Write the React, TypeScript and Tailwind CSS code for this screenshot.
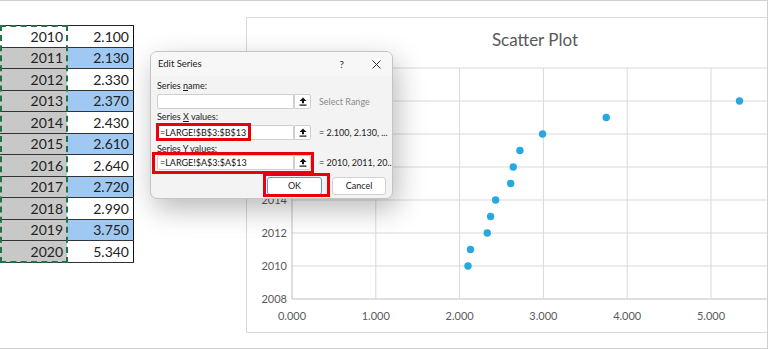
import React from "react";

const rows = [
  [2010, "2.100"],
  [2011, "2.130"],
  [2012, "2.330"],
  [2013, "2.370"],
  [2014, "2.430"],
  [2015, "2.610"],
  [2016, "2.640"],
  [2017, "2.720"],
  [2018, "2.990"],
  [2019, "3.750"],
  [2020, "5.340"],
] as const;

// chart coordinates are relative to the chart box content (page x - 247, page y - 18)
const X0 = 45;
const XS = 83.8;
const YB = 281;
const YS = 16.5;
const px = (v: number) => X0 + v * XS;
const py = (yr: number) => YB - (yr - 2008) * YS;

function UpArrow() {
  return (
    <svg width="8" height="9" viewBox="0 0 8 9">
      <path d="M4 0.5 L7.5 4 L5 4 L5 6.3 L3 6.3 L3 4 L0.5 4 Z" fill="#111" />
      <rect x="0.5" y="7.5" width="7" height="1.2" fill="#111" />
    </svg>
  );
}

function RangeInput({ value }: { value?: string }) {
  return (
    <div className="flex h-[15px] w-[154px] shrink-0">
      <div className="flex-1 h-full bg-white border border-[#cfcfcf] rounded-l-[2px] flex items-center pl-[2px] text-[9px] text-[#111] whitespace-nowrap">
        {value}
      </div>
      <div className="w-[17px] h-full bg-white border border-[#cfcfcf] rounded-r-[2px] flex items-center justify-center">
        <UpArrow />
      </div>
    </div>
  );
}

function ScatterChart() {
  const years = [2008, 2010, 2012, 2014, 2016, 2018, 2020, 2022];
  const xs = [0, 1, 2, 3, 4, 5, 6];
  return (
    <svg width="576" height="314" className="block" style={{ fontFamily: "Lato, sans-serif" }}>
      <text x="288" y="28" textAnchor="middle" fontSize="17" fill="#595959">
        Scatter Plot
      </text>
      {years.map((y) => (
        <line key={y} x1={X0} x2={576} y1={py(y)} y2={py(y)} stroke={y === 2008 ? "#bfbfbf" : "#d9d9d9"} strokeWidth="1" />
      ))}
      {xs.map((x) => (
        <line key={x} x1={px(x)} x2={px(x)} y1={py(2022)} y2={YB} stroke={x === 0 ? "#bfbfbf" : "#d9d9d9"} strokeWidth="1" />
      ))}
      {years.slice(0, 7).map((y) => (
        <text key={y} x={X0 - 5} y={py(y) + 4} textAnchor="end" fontSize="11" fill="#595959">
          {y}
        </text>
      ))}
      {xs.slice(0, 6).map((x) => (
        <text key={x} x={px(x)} y={302} textAnchor="middle" fontSize="11" fill="#595959">
          {x.toFixed(3)}
        </text>
      ))}
      {rows.map(([y, v]) => (
        <circle key={y} cx={px(parseFloat(v))} cy={py(y)} r="3.7" fill="#26a8e0" />
      ))}
    </svg>
  );
}

export default function App() {
  return (
    <div className="relative w-[768px] h-[349px] overflow-hidden bg-white border-t border-r border-b border-[#d0d0d0] flex items-start">
      {/* spreadsheet cells */}
      <div className="relative mt-[24px] w-[134px] shrink-0" style={{ fontFamily: "Lato, sans-serif" }}>
        <div className="border-t border-[#222]">
          {rows.map(([y, v], i) => (
            <div key={y} className="flex h-[21.5px] border-b border-[#333] text-[14px] text-[#222]">
              <div className={`w-[67px] flex items-center justify-end pr-[4px] ${i === 0 ? "bg-white" : "bg-[#c8c8c8]"}`}>
                {y}
              </div>
              <div
                className={`w-[67px] flex items-center justify-end pr-[4px] border-r-[1.5px] border-[#111] ${
                  i % 2 === 1 ? "bg-[#9fc9f3]" : "bg-white"
                }`}
              >
                {v}
              </div>
            </div>
          ))}
        </div>
        <div className="absolute left-0 top-0 w-[68px] h-[238px] border-2 border-dashed border-[#217346]" />
      </div>

      {/* chart */}
      <div className="ml-[112px] mt-[16px] w-[578px] h-[316px] shrink-0 border border-[#d9d9d9] bg-white">
        <ScatterChart />
      </div>

      {/* dialog */}
      <div
        className="absolute left-[150px] top-[50px] w-[243px] h-[148px] rounded-[7px] bg-[#f3f3f3] border border-[#c4c4c4] shadow-[4px_10px_28px_rgba(0,0,0,0.28)] text-[#1a1a1a] overflow-hidden"
        style={{ fontFamily: "Lato, sans-serif" }}
      >
        <div className="h-[24px] flex items-center pl-[7px] pr-[11px] text-[9.5px] bg-[#f7f7f7]">
          <span className="flex-1">Edit Series</span>
          <span className="mr-[28px] text-[10px] text-[#333]">?</span>
          <svg width="9" height="9" viewBox="0 0 9 9">
            <path d="M0.5 0.5 L8.5 8.5 M8.5 0.5 L0.5 8.5" stroke="#333" strokeWidth="1" />
          </svg>
        </div>
        <div className="px-[6px] text-[9px]">
          <div className="mt-[4px] h-[12px] leading-[12px]">
            Series <span className="underline">n</span>ame:
          </div>
          <div className="mt-[2px] flex items-center whitespace-nowrap">
            <RangeInput />
            <span className="ml-[8px] text-[#8a8a8a]">Select Range</span>
          </div>
          <div className="mt-[2px] h-[12px] leading-[12px]">
            Series <span className="underline">X</span> values:
          </div>
          <div className="mt-[2px] flex items-center whitespace-nowrap">
            <RangeInput value="=LARGE!$B$3:$B$13" />
            <span className="ml-[8px] text-[#222]">= 2.100, 2.130, ...</span>
          </div>
          <div className="mt-[3px] h-[12px] leading-[12px]">
            Series <span className="underline">Y</span> values:
          </div>
          <div className="flex items-center whitespace-nowrap">
            <RangeInput value="=LARGE!$A$3:$A$13" />
            <span className="ml-[8px] text-[#222]">= 2010, 2011, 20...</span>
          </div>
          <div className="mt-[7px] flex justify-end gap-[10px]">
            <div className="w-[55px] h-[18px] rounded-[3px] bg-white border-[1.5px] border-[#5b9bd5] flex items-center justify-center">
              OK
            </div>
            <div className="w-[54px] h-[18px] rounded-[3px] bg-white border border-[#d0d0d0] flex items-center justify-center">
              Cancel
            </div>
          </div>
        </div>
        <div className="absolute left-[5px] top-[71px] w-[95px] h-[18px] border-[3px] border-[#e8000b]" />
        <div className="absolute left-[1px] top-[100px] w-[162px] h-[22px] border-[3px] border-[#e8000b]" />
        <div className="absolute left-[112px] top-[121px] w-[67px] h-[24px] border-[3px] border-[#e8000b]" />
      </div>
    </div>
  );
}
